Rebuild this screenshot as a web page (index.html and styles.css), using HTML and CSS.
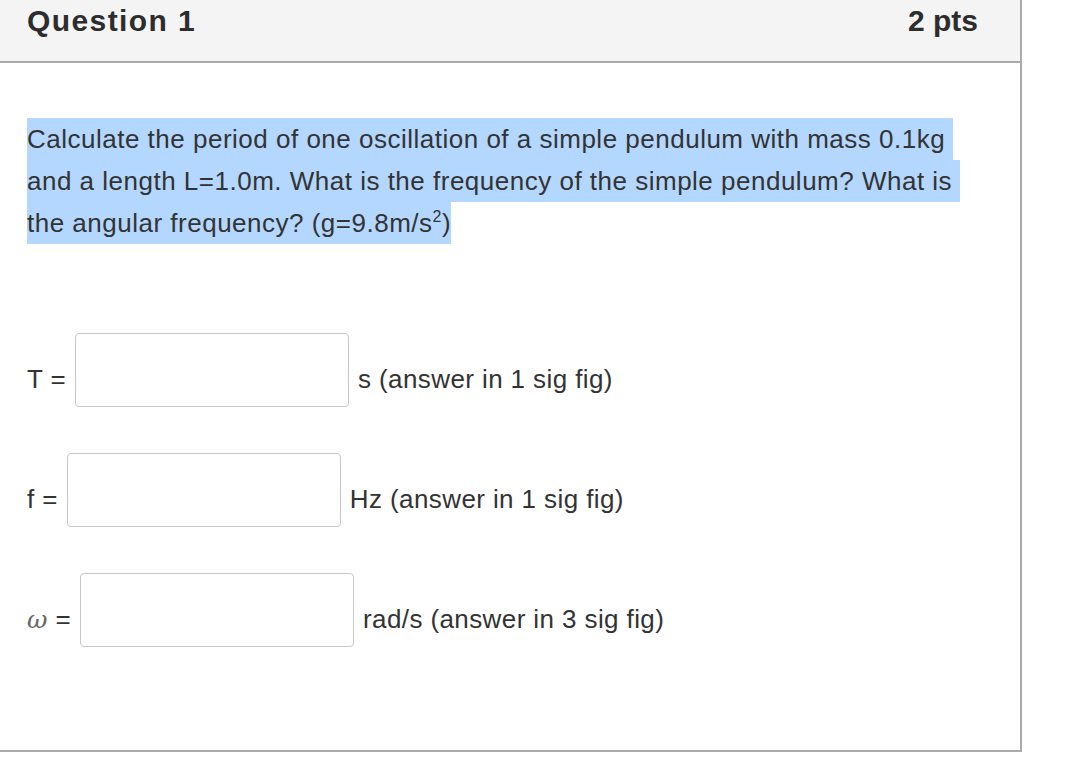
FILE: index.html
```html
<!DOCTYPE html>
<html>
<head>
<meta charset="utf-8">
<link rel="stylesheet" href="styles.css">
</head>
<body>
<div class="card">
  <div class="card-header">
    <span class="q-title">Question 1</span>
    <span class="q-pts">2 pts</span>
  </div>
  <div class="card-body">
    <p class="q-text"><span class="sel">Calculate the period of one oscillation of a simple pendulum with mass 0.1kg&nbsp;<br>and a length L=1.0m. What is the frequency of the simple pendulum? What is&nbsp;<br>the angular frequency? (g=9.8m/s<sup>2</sup>)</span></p>
    <div class="answers">
      <div class="row">
        <span class="lbl">T =</span>
        <input class="box" type="text">
        <span class="unit">s (answer in 1 sig fig)</span>
      </div>
      <div class="row">
        <span class="lbl">f =</span>
        <input class="box" type="text">
        <span class="unit">Hz (answer in 1 sig fig)</span>
      </div>
      <div class="row">
        <span class="lbl"><span class="omega">ω</span> =</span>
        <input class="box" type="text">
        <span class="unit">rad/s (answer in 3 sig fig)</span>
      </div>
    </div>
  </div>
</div>
</body>
</html>
```

FILE: styles.css
```css
html, body {
  margin: 0;
  padding: 0;
  background: #fff;
}
body {
  font-family: "Liberation Sans", Arial, sans-serif;
  color: #333;
}
.card {
  width: 1020px;
  border-right: 2px solid #aaa;
  border-bottom: 2px solid #aaa;
  height: 750px;
  box-sizing: content-box;
}
.card-header {
  height: 63px;
  box-sizing: border-box;
  background: #f4f4f4;
  border-bottom: 2px solid #aaa;
  display: flex;
  justify-content: space-between;
  align-items: flex-start;
  padding: 6px 42px 0 27px;
  font-weight: bold;
  font-size: 30px;
  line-height: 30px;
  color: #2d2d2d;
}
.q-title {
  letter-spacing: 1.4px;
}
.card-body {
  padding: 0 0 0 27px;
}
.q-text {
  margin: 0;
  padding-top: 55px;
  font-size: 26px;
  letter-spacing: 0.5px;
  line-height: 42px;
}
.sel {
  background: #b3d7fe;
  padding: 6px 0;
}
.sel sup {
  font-size: 16px;
  line-height: 0;
}
.answers {
  padding-top: 89px;
  display: flex;
  flex-direction: column;
  gap: 46px;
}
.row {
  display: flex;
  align-items: center;
  gap: 9px;
  font-size: 26px;
  letter-spacing: 0.4px;
}
.lbl, .unit {
  padding-top: 18px;
}
.box {
  width: 274px;
  height: 74px;
  box-sizing: border-box;
  border: 1px solid #c8c8c8;
  border-radius: 4px;
  margin: 0;
  padding: 0;
  background: #fff;
}
.omega {
  font-family: "DejaVu Serif", serif;
  font-style: italic;
  color: #666;
  font-size: 25px;
}
```
